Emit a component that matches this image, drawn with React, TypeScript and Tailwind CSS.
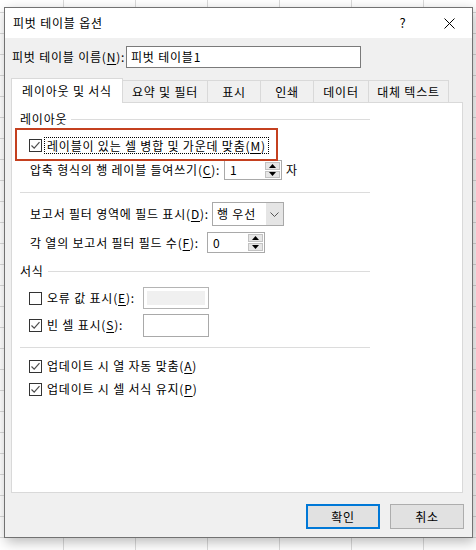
import React from 'react'

// Small pieces of the Windows dialog
function Check({ checked }: { checked: boolean }) {
  return (
    <span className="flex h-[13px] w-[13px] shrink-0 items-center justify-center border border-[#333] bg-white">
      {checked && (
        <svg width="11" height="11" viewBox="0 0 11 11">
          <path d="M1.5 5.5 L4.2 8.2 L9.5 2.2" fill="none" stroke="#4d4d4d" strokeWidth="1.2" />
        </svg>
      )}
    </span>
  )
}

function Acc({ k }: { k: string }) {
  return (
    <>
      (<span className="underline underline-offset-[2px]">{k}</span>)
    </>
  )
}

function Tri({ down }: { down?: boolean }) {
  return (
    <svg width="7" height="4" viewBox="0 0 7 4">
      <path d={down ? 'M0 0 L7 0 L3.5 4 Z' : 'M0 4 L3.5 0 L7 4 Z'} fill="#000" />
    </svg>
  )
}

function Spin({ value, h }: { value: string; h: string }) {
  return (
    <div className={`flex ${h} w-[58px] border border-[#a9a9a9] bg-white`}>
      <span className="flex flex-1 items-center pl-[5px]">{value}</span>
      <div className="flex w-[17px] flex-col gap-px p-px">
        <span className="flex flex-1 items-center justify-center border border-[#c2c2c2] bg-[#e6e6e6]">
          <Tri />
        </span>
        <span className="flex flex-1 items-center justify-center border border-[#c2c2c2] bg-[#e6e6e6]">
          <Tri down />
        </span>
      </div>
    </div>
  )
}

function GroupHead({ text, mt }: { text: string; mt: string }) {
  return (
    <div className={`${mt} flex h-[16px] w-[350px] items-center gap-[4px]`}>
      <span>{text}</span>
      <span className="h-px flex-1 bg-[#dcdcdc]" />
    </div>
  )
}

function Rule({ mt }: { mt: string }) {
  return <div className={`${mt} h-px w-[350px] bg-[#dcdcdc]`} />
}

function CheckRow({ mt, checked, children }: { mt: string; checked: boolean; children: React.ReactNode }) {
  return (
    <div className={`${mt} flex h-[18px] items-center pl-[9px]`}>
      <Check checked={checked} />
      <span className="ml-[2px] border border-transparent px-[2px]">{children}</span>
    </div>
  )
}

const tabs = [
  { text: '요약 및 필터', w: 'w-[85px]' },
  { text: '표시', w: 'w-[53px]' },
  { text: '인쇄', w: 'w-[53px]' },
  { text: '데이터', w: 'w-[55px]' },
  { text: '대체 텍스트', w: 'w-[80px]' },
]

export default function App() {
  return (
    <div className="h-[550px] w-[476px] overflow-hidden whitespace-nowrap bg-white bg-[linear-gradient(to_right,#dadada_1px,transparent_1px),linear-gradient(to_bottom,#dadada_1px,transparent_1px)] bg-[size:72px_21px] bg-[position:63px_12px] pl-[4px] pt-[7px] font-['Noto_Sans_CJK_KR',sans-serif] text-[12px] leading-[16px] tracking-[0.8px] text-black">
      <div className="w-[469px] border border-[#727272] shadow-[2px_4px_12px_rgba(0,0,0,0.28)]">
        {/* title bar */}
        <div className="flex h-[30px] items-center bg-white pl-[8px]">
          <span>피벗 테이블 옵션</span>
          <span className="ml-auto flex h-full w-[46px] items-center justify-center text-[13px]">?</span>
          <span className="flex h-full w-[46px] items-center justify-center">
            <svg width="11" height="11" viewBox="0 0 11 11">
              <path d="M0.5 0.5 L10.5 10.5 M10.5 0.5 L0.5 10.5" stroke="#000" strokeWidth="1" />
            </svg>
          </span>
        </div>

        <div className="bg-[#f0f0f0] pb-[8px] pt-[8px]">
          {/* name */}
          <div className="flex items-center pl-[7px]">
            <span className="w-[114px]">
              피벗 테이블 이름<Acc k="N" />:
            </span>
            <div className="flex h-[22px] w-[235px] items-center border border-[#7a7a7a] bg-white pl-[4px]">
              피벗 테이블1
            </div>
          </div>

          {/* tabs */}
          <div className="ml-[6px] mt-[10px] flex h-[24px] items-end">
            <div className="relative z-10 -mb-px flex h-[25px] w-[112px] items-center justify-center border-x border-t border-[#d9d9d9] bg-white pb-px">
              레이아웃 및 서식
            </div>
            {tabs.map((t) => (
              <div
                key={t.text}
                className={`flex h-[22px] ${t.w} items-center justify-center border-r border-t border-[#d9d9d9]`}
              >
                {t.text}
              </div>
            ))}
          </div>

          {/* panel */}
          <div className="relative ml-[6px] flex h-[391px] w-[452px] flex-col border border-[#d9d9d9] bg-white pl-[8px]">
            <GroupHead text="레이아웃" mt="mt-[8px]" />

            <div className="mt-[9px] flex h-[18px] items-center pl-[9px]">
              <Check checked />
              <span className="ml-[2px] border border-dotted border-black px-[2px] leading-[15px]">
                레이블이 있는 셀 병합 및 가운데 맞춤<Acc k="M" />
              </span>
            </div>

            <div className="mt-[6px] flex h-[20px] items-center pl-[10px]">
              <span className="w-[194px]">
                압축 형식의 행 레이블 들여쓰기<Acc k="C" />:
              </span>
              <Spin value="1" h="h-[20px]" />
              <span className="ml-[4px]">자</span>
            </div>

            <Rule mt="mt-[12px]" />

            <div className="mt-[9px] flex h-[24px] items-center pl-[10px]">
              <span className="w-[182px]">
                보고서 필터 영역에 필드 표시<Acc k="D" />:
              </span>
              <div className="flex h-[24px] w-[72px] border border-[#a9a9a9] bg-white">
                <span className="flex flex-1 items-center pl-[4px]">행 우선</span>
                <span className="flex w-[17px] items-center justify-center bg-[#e5e5e5]">
                  <svg width="9" height="5" viewBox="0 0 9 5">
                    <path d="M0.5 0.5 L4.5 4.5 L8.5 0.5" fill="none" stroke="#555" strokeWidth="1" />
                  </svg>
                </span>
              </div>
            </div>

            <div className="mt-[6px] flex h-[21px] items-center pl-[10px]">
              <span className="w-[177px]">
                각 열의 보고서 필터 필드 수<Acc k="F" />:
              </span>
              <Spin value="0" h="h-[21px]" />
            </div>

            <GroupHead text="서식" mt="mt-[10px]" />

            <div className="mt-[8px] flex h-[22px] items-center pl-[9px]">
              <Check checked={false} />
              <span className="ml-[2px] w-[99px] border border-transparent px-[2px]">
                오류 값 표시<Acc k="E" />:
              </span>
              <div className="h-[22px] w-[66px] border border-[#b4b4b4] bg-white p-[3px]">
                <div className="h-full w-full bg-[#f0f0f0]" />
              </div>
            </div>

            <div className="mt-[5px] flex h-[22px] items-center pl-[9px]">
              <Check checked />
              <span className="ml-[2px] w-[99px] border border-transparent px-[2px]">
                빈 셀 표시<Acc k="S" />:
              </span>
              <div className="h-[23px] w-[66px] border border-[#a9a9a9] bg-white" />
            </div>

            <Rule mt="mt-[11px]" />

            <CheckRow mt="mt-[9px]" checked>
              업데이트 시 열 자동 맞춤<Acc k="A" />
            </CheckRow>
            <CheckRow mt="mt-[5px]" checked>
              업데이트 시 셀 서식 유지<Acc k="P" />
            </CheckRow>

            {/* annotation box laid over the first option */}
            <div className="absolute left-[3px] top-[25px] h-[33px] w-[263px] border-2 border-[#c4401f]" />
          </div>

          {/* buttons */}
          <div className="mt-[11px] flex justify-end gap-[10px] pr-[8px]">
            <div className="flex h-[25px] w-[74px] items-center justify-center border-2 border-[#0078d7] bg-[#e1e1e1]">
              확인
            </div>
            <div className="flex h-[25px] w-[74px] items-center justify-center border border-[#adadad] bg-[#e1e1e1]">
              취소
            </div>
          </div>
        </div>
      </div>
    </div>
  )
}
